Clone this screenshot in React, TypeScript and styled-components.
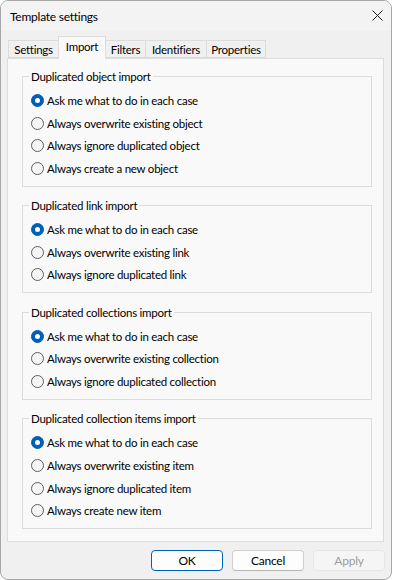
import styled, { createGlobalStyle } from "styled-components";

const colors = {
  windowBg: "#f0f0f0",
  titleBg: "#f3f3f3",
  panelBg: "#f9f9f9",
  line: "#dcdcdc",
  frame: "#a8a8a8",
  accent: "#005fb8",
  text: "#000000",
  disabled: "#9d9d9d",
};

const GlobalStyle = createGlobalStyle`
  html, body {
    margin: 0;
    padding: 0;
    background: #ffffff;
  }
  * {
    box-sizing: border-box;
  }
`;

const Window = styled.div`
  width: 392px;
  height: 580px;
  border: 1px solid ${colors.frame};
  border-radius: 8px;
  background: ${colors.windowBg};
  display: flex;
  flex-direction: column;
  overflow: hidden;
  font-family: "Lato", "Liberation Sans", sans-serif;
  font-size: 11.5px;
  letter-spacing: -0.25px;
  color: ${colors.text};
`;

const TitleBar = styled.div`
  height: 30px;
  display: flex;
  align-items: center;
  justify-content: space-between;
  padding-left: 9px;
  background: ${colors.titleBg};
`;

const TitleText = styled.span`
  font-size: 12px;
`;

const CloseButton = styled.div`
  width: 28px;
  height: 28px;
  display: flex;
  align-items: center;
  justify-content: center;
  margin-top: -2px;
`;

const Body = styled.div`
  flex: 1;
  display: flex;
  flex-direction: column;
  padding: 5px 7px 0 6px;
`;

const TabStrip = styled.div`
  height: 22px;
  display: flex;
  align-items: flex-end;
  padding-left: 1px;
`;

const Tab = styled.div<{ $active?: boolean; $width: number }>`
  position: relative;
  width: ${(p) => p.$width}px;
  height: ${(p) => (p.$active ? 23 : 18)}px;
  margin-left: -1px;
  margin-bottom: ${(p) => (p.$active ? -1 : 0)}px;
  border: 1px solid ${colors.line};
  border-bottom: ${(p) => (p.$active ? "none" : `1px solid ${colors.line}`)};
  background: ${(p) => (p.$active ? colors.panelBg : colors.windowBg)};
  z-index: ${(p) => (p.$active ? 1 : 0)};
  display: flex;
  align-items: center;
  justify-content: center;
  padding-bottom: ${(p) => (p.$active ? 4 : 0)}px;

  &:first-child {
    margin-left: 0;
  }
`;

const Panel = styled.div`
  flex: 1;
  border: 1px solid ${colors.line};
  background: ${colors.panelBg};
  padding: 10px 11px 0 14px;
  display: flex;
  flex-direction: column;
  gap: 11.5px;
`;

const Group = styled.fieldset`
  margin: 0;
  border: 1px solid ${colors.line};
  padding: 5px 8px 6px;
  min-width: 0;
`;

const Legend = styled.legend`
  padding: 0 2px;
  margin-left: -2px;
  line-height: 15px;
`;

const Option = styled.div`
  height: 22.7px;
  display: flex;
  align-items: center;
  gap: 3px;
`;

const RadioDot = styled.span<{ $checked?: boolean }>`
  width: 13px;
  height: 13px;
  border-radius: 50%;
  flex: none;
  display: flex;
  align-items: center;
  justify-content: center;
  border: 1px solid ${(p) => (p.$checked ? colors.accent : "#5f5f5f")};
  background: ${(p) => (p.$checked ? colors.accent : "#f5f5f5")};

  &::after {
    content: "";
    display: ${(p) => (p.$checked ? "block" : "none")};
    width: 5px;
    height: 5px;
    border-radius: 50%;
    background: #ffffff;
  }
`;

const Footer = styled.div`
  height: 37px;
  display: flex;
  justify-content: flex-end;
  align-items: center;
  gap: 9px;
  padding-right: 6px;
`;

const Button = styled.div<{ $variant?: "default" | "primary" | "disabled" }>`
  width: 72px;
  height: 21px;
  border-radius: 4px;
  display: flex;
  align-items: center;
  justify-content: center;
  font-size: 12px;
  background: ${(p) => (p.$variant === "disabled" ? "#f5f5f5" : "#fdfdfd")};
  color: ${(p) => (p.$variant === "disabled" ? colors.disabled : colors.text)};
  border: 1px solid
    ${(p) =>
      p.$variant === "primary"
        ? colors.accent
        : p.$variant === "disabled"
        ? "#e6e6e6"
        : "#d0d0d0"};
  border-bottom-color: ${(p) =>
    p.$variant === "primary"
      ? colors.accent
      : p.$variant === "disabled"
      ? "#e6e6e6"
      : "#b5b5b5"};
`;

const tabs = [
  { label: "Settings", width: 51 },
  { label: "Import", width: 48, active: true },
  { label: "Filters", width: 41 },
  { label: "Identifiers", width: 62 },
  { label: "Properties", width: 60 },
];

const groups = [
  {
    title: "Duplicated object import",
    options: [
      "Ask me what to do in each case",
      "Always overwrite existing object",
      "Always ignore duplicated object",
      "Always create a new object",
    ],
  },
  {
    title: "Duplicated link import",
    options: [
      "Ask me what to do in each case",
      "Always overwrite existing link",
      "Always ignore duplicated link",
    ],
  },
  {
    title: "Duplicated collections import",
    options: [
      "Ask me what to do in each case",
      "Always overwrite existing collection",
      "Always ignore duplicated collection",
    ],
  },
  {
    title: "Duplicated collection items import",
    options: [
      "Ask me what to do in each case",
      "Always overwrite existing item",
      "Always ignore duplicated item",
      "Always create new item",
    ],
  },
];

const App = () => {
  return (
    <>
      <GlobalStyle />
      <Window>
        <TitleBar>
          <TitleText>Template settings</TitleText>
          <CloseButton>
            <svg width="11" height="11" viewBox="0 0 11 11">
              <path d="M0.5 0.5 L10.5 10.5 M10.5 0.5 L0.5 10.5" stroke="#1a1a1a" strokeWidth="1" />
            </svg>
          </CloseButton>
        </TitleBar>

        <Body>
          <TabStrip>
            {tabs.map((t) => (
              <Tab key={t.label} $active={t.active} $width={t.width}>
                {t.label}
              </Tab>
            ))}
          </TabStrip>

          <Panel>
            {groups.map((g) => (
              <Group key={g.title}>
                <Legend>{g.title}</Legend>
                {g.options.map((o, i) => (
                  <Option key={o}>
                    <RadioDot $checked={i === 0} />
                    <span>{o}</span>
                  </Option>
                ))}
              </Group>
            ))}
          </Panel>
        </Body>

        <Footer>
          <Button $variant="primary">OK</Button>
          <Button>Cancel</Button>
          <Button $variant="disabled">Apply</Button>
        </Footer>
      </Window>
    </>
  );
};

export default App;
